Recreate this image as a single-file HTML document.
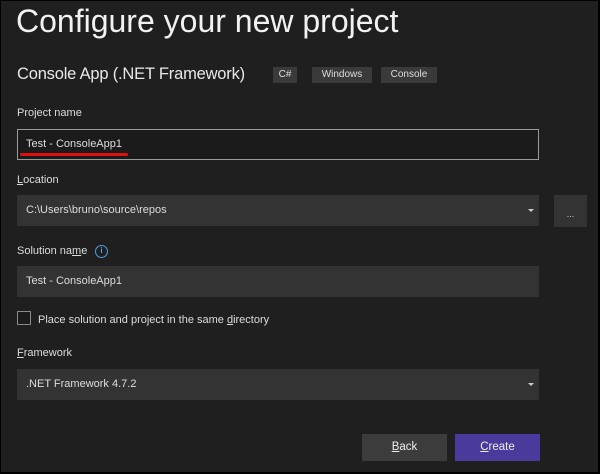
<!DOCTYPE html>
<html><head><style>
*{margin:0;padding:0;box-sizing:border-box}
body{width:600px;height:474px;background:#000;font-family:"Liberation Sans",sans-serif;color:#e6e6e6;overflow:hidden}
.f{position:absolute;left:1px;top:1px;width:597px;height:471px;background:#1f1f1f}
.a{position:absolute}
.lbl{font-size:11px;color:#dcdcdc}
.box{position:absolute;left:17px;width:522px;height:31px;background:#333;font-size:11px;line-height:31px;padding-left:9px;color:#ddd}
.tag{position:absolute;top:67px;height:16px;background:#3a3a3a;font-size:10px;line-height:16px;text-align:center;color:#ddd}
.dd{position:absolute;right:5px;top:14px;border-left:3px solid transparent;border-right:3px solid transparent;border-top:3px solid #ccc}
.btn{position:absolute;top:434px;height:27px;width:85px;font-size:11.5px;line-height:27px;text-align:center;color:#eee}
</style></head><body>
<div class="f"></div>
<div class="a" style="left:16px;top:3px;font-size:32px;color:#f2f2f2">Configure your new project</div>
<div class="a" style="left:17px;top:65px;font-size:16.5px;color:#e8e8e8;letter-spacing:-0.2px">Console App (.NET Framework)</div>
<div class="tag" style="left:273px;width:24px">C#</div>
<div class="tag" style="left:312px;width:60px">Windows</div>
<div class="tag" style="left:381px;width:56px">Console</div>
<div class="a lbl" style="left:17px;top:107px">Project name</div>
<div class="box" style="top:129px;background:#1b1b1b;border:1px solid #9a9a9a;line-height:29px;padding-left:8px">Test - ConsoleApp1</div>
<div class="a" style="left:20px;top:153px;width:108px;height:3px;background:#e01010;border-radius:2px"></div>
<div class="a lbl" style="left:17px;top:174px"><u>L</u>ocation</div>
<div class="box" style="top:195px">C:\Users\bruno\source\repos<div class="dd"></div></div>
<div class="a" style="left:554px;top:195px;width:33px;height:32px;background:#333;font-size:9px;text-align:center;line-height:38px;color:#ccc">...</div>
<div class="a lbl" style="left:17px;top:245px">Solution na<u>m</u>e</div>
<div class="a" style="left:95px;top:245px;width:13px;height:13px;border:1.5px solid #4aa3e0;border-radius:50%;font-size:8px;line-height:10px;text-align:center;color:#4aa3e0;font-weight:bold">i</div>
<div class="box" style="top:266px">Test - ConsoleApp1</div>
<div class="a" style="left:17px;top:311px;width:14px;height:14px;border:1px solid #8a8a8a;background:#1b1b1b"></div>
<div class="a lbl" style="left:38px;top:314px">Place solution and project in the same <u>d</u>irectory</div>
<div class="a lbl" style="left:17px;top:347px"><u>F</u>ramework</div>
<div class="box" style="top:369px">.NET Framework 4.7.2<div class="dd"></div></div>
<div class="btn" style="left:362px;background:#3c3c3c"><u>B</u>ack</div>
<div class="btn" style="left:455px;background:#4a3a9c"><u>C</u>reate</div>
</body></html>
